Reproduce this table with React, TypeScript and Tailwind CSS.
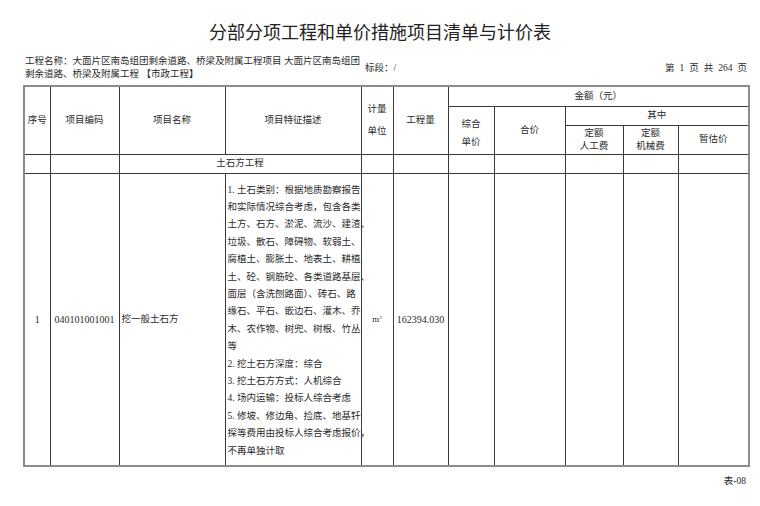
const desc = [
  '1. 土石类别：根据地质勘察报告',
  '和实际情况综合考虑，包含各类',
  '土方、石方、淤泥、流沙、建渣、',
  '垃圾、散石、障碍物、软弱土、',
  '腐植土、膨胀土、地表土、耕植',
  '土、砼、钢筋砼、各类道路基层、',
  '面层（含洗刨路面）、砖石、路',
  '缘石、平石、嵌边石、灌木、乔',
  '木、农作物、树兜、树根、竹丛',
  '等',
  '2. 挖土石方深度：综合',
  '3. 挖土石方方式：人机综合',
  '4. 场内运输：投标人综合考虑',
  '5. 修坡、修边角、捡底、地基钎',
  '探等费用由投标人综合考虑报价，',
  '不再单独计取',
];

const colWidths = [26, 69, 106, 136, 32, 55, 46, 71, 58, 55, 71];

const cell = 'border border-[#3a3a3a] p-0 text-center align-middle font-normal';

export default function App() {
  return (
    <div className="w-[760px] h-[506px] bg-white text-[#2a2a2a] font-['Liberation_Serif','Noto_Sans_CJK_SC',serif]">
      <div className="pt-[21px] text-center text-[18px] leading-[24px] text-[#222]">
        分部分项工程和单价措施项目清单与计价表
      </div>

      <div className="mt-[10px] flex items-center pl-[25px] pr-[13px] text-[9.5px]">
        <div className="w-[340px] leading-[13px]">
          <div className="whitespace-nowrap">工程名称：大面片区南岛组团剩余道路、桥梁及附属工程项目 大面片区南岛组团</div>
          <div className="whitespace-nowrap">剩余道路、桥梁及附属工程 【市政工程】</div>
        </div>
        <div className="whitespace-nowrap">标段：/</div>
        <div className="ml-auto flex gap-[5px] whitespace-nowrap">
          <span>第</span>
          <span>1</span>
          <span>页</span>
          <span>共</span>
          <span>264</span>
          <span>页</span>
        </div>
      </div>

      <table className="mt-[4px] ml-[23px] w-[725px] table-fixed border-collapse border-2 border-[#8c8c8c] text-[9.5px]">
        <colgroup>
          {colWidths.map((w, i) => (
            <col key={i} style={{ width: w }} />
          ))}
        </colgroup>
        <thead>
          <tr className="h-[20px]">
            <th rowSpan={3} className={cell}>序号</th>
            <th rowSpan={3} className={cell}>项目编码</th>
            <th rowSpan={3} className={cell}>项目名称</th>
            <th rowSpan={3} className={cell}>项目特征描述</th>
            <th rowSpan={3} className={`${cell} leading-[22px]`}>计量<br />单位</th>
            <th rowSpan={3} className={cell}>工程量</th>
            <th colSpan={5} className={cell}>金额（元）</th>
          </tr>
          <tr className="h-[19px]">
            <th rowSpan={2} className={`${cell} leading-[18px] pt-[6px]`}>综合<br />单价</th>
            <th rowSpan={2} className={cell}>合价</th>
            <th colSpan={3} className={cell}>其中</th>
          </tr>
          <tr className="h-[29px]">
            <th className={`${cell} leading-[13px]`}>定额<br />人工费</th>
            <th className={`${cell} leading-[13px]`}>定额<br />机械费</th>
            <th className={cell}>暂估价</th>
          </tr>
        </thead>
        <tbody>
          <tr className="h-[19px]">
            <td className={cell}></td>
            <td className={cell}></td>
            <td colSpan={2} className={cell}>土石方工程</td>
            <td className={cell}></td>
            <td className={cell}></td>
            <td className={cell}></td>
            <td className={cell}></td>
            <td className={cell}></td>
            <td className={cell}></td>
            <td className={cell}></td>
          </tr>
          <tr className="h-[293px]">
            <td className={`${cell} text-[10px]`}>1</td>
            <td className={`${cell} text-[10px]`}>040101001001</td>
            <td className={`${cell} text-left pl-[2px]`}>挖一般土石方</td>
            <td className={`${cell} text-left align-top pl-[2px] pt-[8px] leading-[17.4px]`}>
              {desc.map((l, i) => (
                <div key={i} className="whitespace-nowrap">{l}</div>
              ))}
            </td>
            <td className={`${cell} text-[9px]`}>m<sup className="text-[5px]">3</sup></td>
            <td className={`${cell} text-[10px]`}>162394.030</td>
            <td className={cell}></td>
            <td className={cell}></td>
            <td className={cell}></td>
            <td className={cell}></td>
            <td className={cell}></td>
          </tr>
        </tbody>
      </table>

      <div className="mt-[8px] w-[746px] text-right text-[9.5px] leading-[12px]">表-08</div>
    </div>
  );
}
